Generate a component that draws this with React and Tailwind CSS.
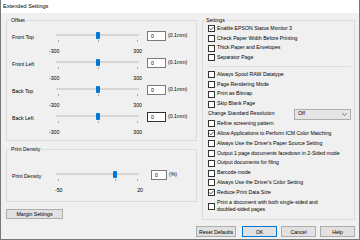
import { useState } from 'react'

const offsets = [
  { label: 'Front Top', value: 0 },
  { label: 'Front Left', value: 0 },
  { label: 'Back Top', value: 0 },
  { label: 'Back Left', value: 0, focused: true },
]

const topChecks = [
  { label: 'Enable EPSON Status Monitor 3', checked: true },
  { label: 'Check Paper Width Before Printing' },
  { label: 'Thick Paper and Envelopes' },
  { label: 'Separator Page' },
]

const lowChecks = [
  { label: 'Always Spool RAW Datatype' },
  { label: 'Page Rendering Mode' },
  { label: 'Print as Bitmap' },
  { label: 'Skip Blank Page' },
  { label: 'Change Standard Resolution', select: 'Off' },
  { label: 'Refine screening pattern' },
  { label: 'Allow Applications to Perform ICM Color Matching', checked: true },
  { label: "Always Use the Driver's Paper Source Setting" },
  { label: 'Output 1 page documents facedown in 2-Sided mode' },
  { label: 'Output documents for filing' },
  { label: 'Barcode mode' },
  { label: "Always Use the Driver's Color Setting" },
  { label: 'Reduce Print Data Size', checked: true },
]

function Check({ checked }) {
  return (
    <span className="w-[7px] h-[7px] border border-[#333] bg-white flex items-center justify-center shrink-0">
      {checked && (
        <svg width="5" height="5" viewBox="0 0 5 5">
          <path d="M0.4 2.6 L1.8 3.9 L4.6 0.9" fill="none" stroke="#222" strokeWidth="0.8" />
        </svg>
      )}
    </span>
  )
}

function Slider({ label, min, max, value, unit, focused, density }) {
  const pct = (value - min) / (max - min)
  const x = pct * 83
  return (
    <div className="h-[27px] flex items-start">
      <div className="w-[44px] pt-[3px] leading-[6px]">{label}</div>
      <div className="w-[83px] flex flex-col">
        <div className="relative h-[7px] mt-[1px]">
          <div className="mt-[2px] h-[2px] bg-[#e7eaea] border-y border-[#d6d6d6]" />
          <div
            className="absolute top-0 w-[4px] h-[7px] bg-[#0078d7] rounded-[1px]"
            style={{ left: x - 2 }}
          />
        </div>
        <svg width="83" height="3" className="mt-[1px]">
          <rect x="2" y="0" width="1" height="2" fill="#aaa" />
          <rect x={Math.round(x)} y="0" width="1" height="2" fill="#aaa" />
          <rect x="81" y="0" width="1" height="2" fill="#aaa" />
        </svg>
        <div
          className={
            density
              ? 'flex justify-between mt-[5px] leading-[6px] -ml-[1px] -mr-[4px]'
              : 'flex justify-between mt-[5px] leading-[6px] -ml-[7px] -mr-[3px]'
          }
        >
          <span>{min}</span>
          <span>{max}</span>
        </div>
      </div>
      <div
        className={`${density ? 'ml-[12px] w-[16px]' : 'ml-[8px] w-[19px]'} h-[10px] bg-white border ${
          focused ? 'border-[#333]' : 'border-[#7a7a7a]'
        } pl-[3px] leading-[8px]`}
      >
        {value}
      </div>
      <span className="ml-[2px] leading-[6px] pt-[1px]">{unit}</span>
    </div>
  )
}

function Btn({ children, w, h = 'h-[11px]', primary }) {
  return (
    <button
      className={`${w} ${h} bg-[#e1e1e1] border ${
        primary ? 'border-[#0078d7]' : 'border-[#adadad]'
      } leading-[8px] text-center`}
    >
      {children}
    </button>
  )
}

export default function App() {
  const [vals] = useState(offsets)
  return (
    <div className="w-[360px] h-[240px] bg-[#f0f0f0] border-x border-b border-[#777] flex flex-col font-['Liberation_Sans',Arial,sans-serif] text-[5.2px] text-black overflow-hidden">
      <div className="h-[13px] bg-white pl-[2px] flex items-center text-[5.6px]">Extended Settings</div>

      <div className="flex gap-[5px] pl-[5px] pt-[4px]">
        <div className="w-[191px] flex flex-col">
          <fieldset className="border border-[#dcdcdc] pb-[1px]">
            <legend className="ml-[3px] px-[1px] leading-[7px]">Offset</legend>
            <div className="pl-[5px] pt-[7px]">
              {vals.map((o) => (
                <Slider
                  key={o.label}
                  label={o.label}
                  min={-300}
                  max={300}
                  value={o.value}
                  unit="(0.1mm)"
                  focused={o.focused}
                />
              ))}
            </div>
          </fieldset>

          <fieldset className="border border-[#dcdcdc] mt-[5px] pb-[4px]">
            <legend className="ml-[3px] px-[1px] leading-[7px]">Print Density</legend>
            <div className="pl-[5px] pt-[17px]">
              <Slider label="Print Density" min={-50} max={20} value={0} unit="(%)" density />
            </div>
          </fieldset>

          <div className="mt-[7px]">
            <Btn w="w-[57px]" h="h-[10px]">Margin Settings</Btn>
          </div>
        </div>

        <fieldset className="w-[153px] h-[203px] border border-[#dcdcdc]">
          <legend className="ml-[2px] px-[1px] leading-[7px]">Settings</legend>
          <div className="pl-[5px] pr-[3px]">
            {topChecks.map((c) => (
              <div key={c.label} className="h-[9.7px] flex items-center gap-[2px]">
                <Check checked={c.checked} />
                <span>{c.label}</span>
              </div>
            ))}
            <div className="h-[7px] flex items-center -ml-[1px]">
              <div className="w-[144px] h-px bg-[#dcdcdc]" />
            </div>
            {lowChecks.map((c) =>
              c.select ? (
                <div key={c.label} className="h-[9.85px] flex items-center justify-between">
                  <span>{c.label}</span>
                  <div className="w-[57px] h-[11px] bg-[#e5e5e5] border border-[#acacac] flex items-center justify-between pl-[3px] pr-[3px]">
                    <span>{c.select}</span>
                    <svg width="5" height="3" viewBox="0 0 5 3">
                      <path d="M0.3 0.3 L2.5 2.5 L4.7 0.3" fill="none" stroke="#444" strokeWidth="0.7" />
                    </svg>
                  </div>
                </div>
              ) : (
                <div key={c.label} className="h-[9.85px] flex items-center gap-[2px]">
                  <Check checked={c.checked} />
                  <span>{c.label}</span>
                </div>
              )
            )}
            <div className="flex items-center gap-[2px] mt-[1.5px]">
              <Check />
              <span className="leading-[7px]">
                Print a document with both single-sided and
                <br />
                doubled-sided pages
              </span>
            </div>
          </div>
        </fieldset>
      </div>

      <div className="flex justify-end pr-[4px] mt-[6px]">
        <Btn w="w-[40px]">Reset Defaults</Btn>
        <div className="ml-[6px]">
          <Btn w="w-[35px]" primary>OK</Btn>
        </div>
        <div className="ml-[4px]">
          <Btn w="w-[35px]">Cancel</Btn>
        </div>
        <div className="ml-[4px]">
          <Btn w="w-[35px]">Help</Btn>
        </div>
      </div>
    </div>
  )
}
